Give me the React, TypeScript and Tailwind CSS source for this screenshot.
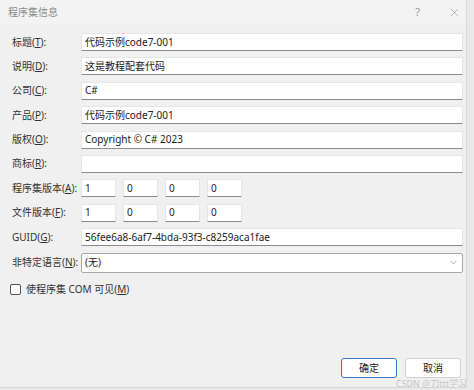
import { ChevronDown, X } from 'lucide-react'

const font = { fontFamily: '"Noto Sans", "Noto Sans CJK SC", sans-serif' }

function Label({ text, hotkey }: { text: string; hotkey: string }) {
  return (
    <div className="w-[69px] shrink-0 text-[10px] text-[#333] whitespace-nowrap">
      {text}(<span className="underline">{hotkey}</span>):
    </div>
  )
}

function Field({ value, className = 'flex-1' }: { value?: string; className?: string }) {
  return (
    <div className={`${className} h-[18px] bg-white border border-[#e6e6e6] border-b-[#8c8c8c] flex items-center pl-[3px] text-[10px] text-[#222] whitespace-nowrap overflow-hidden`}>
      {value}
    </div>
  )
}

export default function App() {
  const textRows = [
    { label: '标题', key: 'T', value: '代码示例code7-001' },
    { label: '说明', key: 'D', value: '这是教程配套代码' },
    { label: '公司', key: 'C', value: 'C#' },
    { label: '产品', key: 'P', value: '代码示例code7-001' },
    { label: '版权', key: 'O', value: 'Copyright © C# 2023' },
    { label: '商标', key: 'R', value: '' },
  ]

  return (
    <div className="w-[474px] h-[390px] bg-[#e9e9e9] flex" style={font}>
      <div className="w-[467px] h-[388px] bg-[#f0f0f0] border-r border-b border-[#d9d9d9] rounded-br-[6px] flex flex-col">
        {/* title bar */}
        <div className="h-[24px] bg-[#f3f3f3] flex items-center pl-[8px] pr-[5px] text-[10px] text-[#8a8a8a]">
          <span>程序集信息</span>
          <span className="ml-auto mr-[28px] text-[11px] text-[#999]">?</span>
          <X className="w-[13px] h-[13px] text-[#999]" strokeWidth={1.2} />
        </div>

        <div className="flex-1 flex flex-col pl-[12px] pr-[3px] pt-[9px] gap-[6.4px]">
          {textRows.map((r) => (
            <div key={r.key} className="flex items-center">
              <Label text={r.label} hotkey={r.key} />
              <Field value={r.value} />
            </div>
          ))}

          {[
            { label: '程序集版本', key: 'A' },
            { label: '文件版本', key: 'F' },
          ].map((r) => (
            <div key={r.key} className="flex items-center">
              <Label text={r.label} hotkey={r.key} />
              <div className="flex gap-[7px]">
                <Field value="1" className="w-[35px]" />
                <Field value="0" className="w-[35px]" />
                <Field value="0" className="w-[35px]" />
                <Field value="0" className="w-[35px]" />
              </div>
            </div>
          ))}

          <div className="flex items-center">
            <Label text="GUID" hotkey="G" />
            <Field value="56fee6a8-6af7-4bda-93f3-c8259aca1fae" />
          </div>

          <div className="flex items-center">
            <Label text="非特定语言" hotkey="N" />
            <div className="flex-1 h-[20px] bg-white border border-[#a8a8a8] rounded-[2px] flex items-center pl-[3px] pr-[3px] text-[10px] text-[#222]">
              (无)
              <ChevronDown className="ml-auto w-[11px] h-[11px] text-[#777]" strokeWidth={1.3} />
            </div>
          </div>

          <div className="flex items-center mt-[3px] -ml-[2px]">
            <div className="w-[11px] h-[11px] border border-[#555] rounded-[2px] bg-white mr-[5px]" />
            <span className="text-[10px] text-[#333]">
              使程序集 COM 可见(<span className="underline">M</span>)
            </span>
          </div>

          <div className="mt-auto mb-[9px] flex justify-end gap-[8px] pr-[2px] relative">
            <div className="w-[56px] h-[20px] bg-white border-[1.5px] border-[#3a78c3] rounded-[3px] flex items-center justify-center text-[10px] text-[#222]">
              确定
            </div>
            <div className="w-[56px] h-[20px] bg-white border border-[#d0d0d0] rounded-[3px] flex items-center justify-center text-[10px] text-[#222]">
              取消
            </div>
            <span className="absolute right-[-4px] bottom-[-12px] text-[9px] leading-[12px] text-[#c4c4c4]">CSDN @刀ttt学习</span>
          </div>
        </div>
      </div>
    </div>
  )
}
